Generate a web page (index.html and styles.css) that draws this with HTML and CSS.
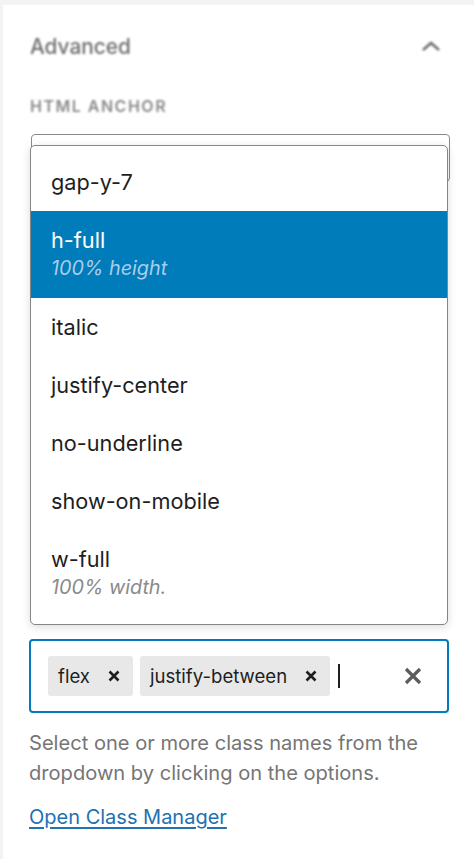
FILE: index.html
```html
<!DOCTYPE html>
<html lang="en">
<head>
<meta charset="utf-8">
<title>Advanced</title>
<link rel="stylesheet" href="styles.css">
</head>
<body>
<div class="panel">
  <div class="behind">
    <div class="header">
      <span class="header-title">Advanced</span>
      <svg class="chevron" width="20" height="12" viewBox="0 0 20 12"><path d="M2 10 L10 3 L18 10" fill="none" stroke="#6f6f6f" stroke-width="2.6"/></svg>
    </div>
    <div class="label">HTML ANCHOR</div>
  </div>
  <div class="stack">
    <div class="under">
      <div class="anchor-input"></div>
    </div>
    <ul class="dropdown">
      <li class="option"><span class="opt-title">gap-y-7</span></li>
      <li class="option is-active"><span class="opt-title">h-full</span><span class="opt-desc">100% height</span></li>
      <li class="option"><span class="opt-title">italic</span></li>
      <li class="option"><span class="opt-title">justify-center</span></li>
      <li class="option"><span class="opt-title">no-underline</span></li>
      <li class="option"><span class="opt-title">show-on-mobile</span></li>
      <li class="option"><span class="opt-title">w-full</span><span class="opt-desc">100% width.</span></li>
    </ul>
  </div>
  <div class="token-field">
    <span class="token"><span class="token-text">flex</span><svg class="token-x" width="12" height="12" viewBox="0 0 12 12"><path d="M1.5 1.5 L10.5 10.5 M10.5 1.5 L1.5 10.5" stroke="#1e1e1e" stroke-width="2.6"/></svg></span>
    <span class="token"><span class="token-text">justify-between</span><svg class="token-x" width="12" height="12" viewBox="0 0 12 12"><path d="M1.5 1.5 L10.5 10.5 M10.5 1.5 L1.5 10.5" stroke="#1e1e1e" stroke-width="2.6"/></svg></span>
    <span class="caret"></span>
    <svg class="clear-x" width="18" height="18" viewBox="0 0 18 18"><path d="M2 2 L16 16 M16 2 L2 16" stroke="#5c5c5c" stroke-width="3.2"/></svg>
  </div>
  <p class="help">Select one or more class names from the dropdown by clicking on the options.</p>
  <a class="link" href="#">Open Class Manager</a>
</div>
</body>
</html>
```

FILE: styles.css
```css
* { box-sizing: border-box; }
html, body { margin: 0; padding: 0; }
body {
  background: #f3f3f3;
  font-family: Inter, "Noto Sans", "Liberation Sans", sans-serif;
  color: #1e1e1e;
}
.panel {
  margin: 5px 0 0 3px;
  background: #fff;
  padding: 0 25px 40px 26px;
  min-height: 854px;
}
.behind {
  filter: blur(1.1px);
}
.header {
  height: 82px;
  display: flex;
  align-items: center;
  justify-content: space-between;
  padding: 0 8px 0 1px;
}
.header-title {
  font-size: 20.8px;
  font-weight: 500;
  color: #6f6f6f;
}
.label {
  margin-top: 11px;
  font-size: 16px;
  line-height: 16px;
  font-weight: 600;
  letter-spacing: 1.5px;
  color: #8a8a8a;
  padding-left: 1px;
}
.stack {
  position: relative;
  margin-top: 20px;
}
.under {
  height: 505px;
  padding-left: 2px;
}
.anchor-input {
  height: 48px;
  border: 1px solid #8a8a8a;
  border-radius: 4px;
  filter: blur(0.4px);
  margin-right: -1px;
}
.dropdown {
  position: absolute;
  top: 11px;
  left: 1px;
  right: 1px;
  margin: 0;
  padding: 7px 0;
  list-style: none;
  background: #fff;
  border: 1px solid #858585;
  border-radius: 5px;
  box-shadow: 0 2px 8px rgba(0, 0, 0, 0.14);
  overflow: hidden;
}
.option {
  display: flex;
  flex-direction: column;
  padding: 15px 20px;
}
.opt-title {
  font-size: 21.7px;
  line-height: 28px;
}
.opt-desc {
  font-size: 19.8px;
  line-height: 29px;
  font-style: italic;
  color: #8a8a8a;
}
.option.is-active {
  background: #007cba;
  color: #fff;
}
.option.is-active .opt-desc {
  color: #aacde8;
}
.token-field {
  height: 74px;
  border: 2px solid #007cba;
  border-radius: 4px;
  display: flex;
  align-items: center;
  gap: 7px;
  padding: 0 23px 0 17px;
}
.token {
  height: 40px;
  display: flex;
  align-items: center;
  gap: 18px;
  background: #e8e8e8;
  border-radius: 3px;
  padding: 0 13px 0 10px;
  font-size: 18.6px;
}
.caret {
  width: 2px;
  height: 24px;
  background: #1e1e1e;
  margin-left: 1px;
}
.clear-x {
  margin-left: auto;
  margin-right: 2px;
}
.help {
  margin: 15px 0 0;
  font-size: 20.1px;
  line-height: 30px;
  color: #757575;
}
.link {
  display: inline-block;
  margin-top: 14px;
  font-size: 20px;
  line-height: 30px;
  color: #2271b1;
  text-decoration: underline;
  text-underline-offset: 3px;
}
```
